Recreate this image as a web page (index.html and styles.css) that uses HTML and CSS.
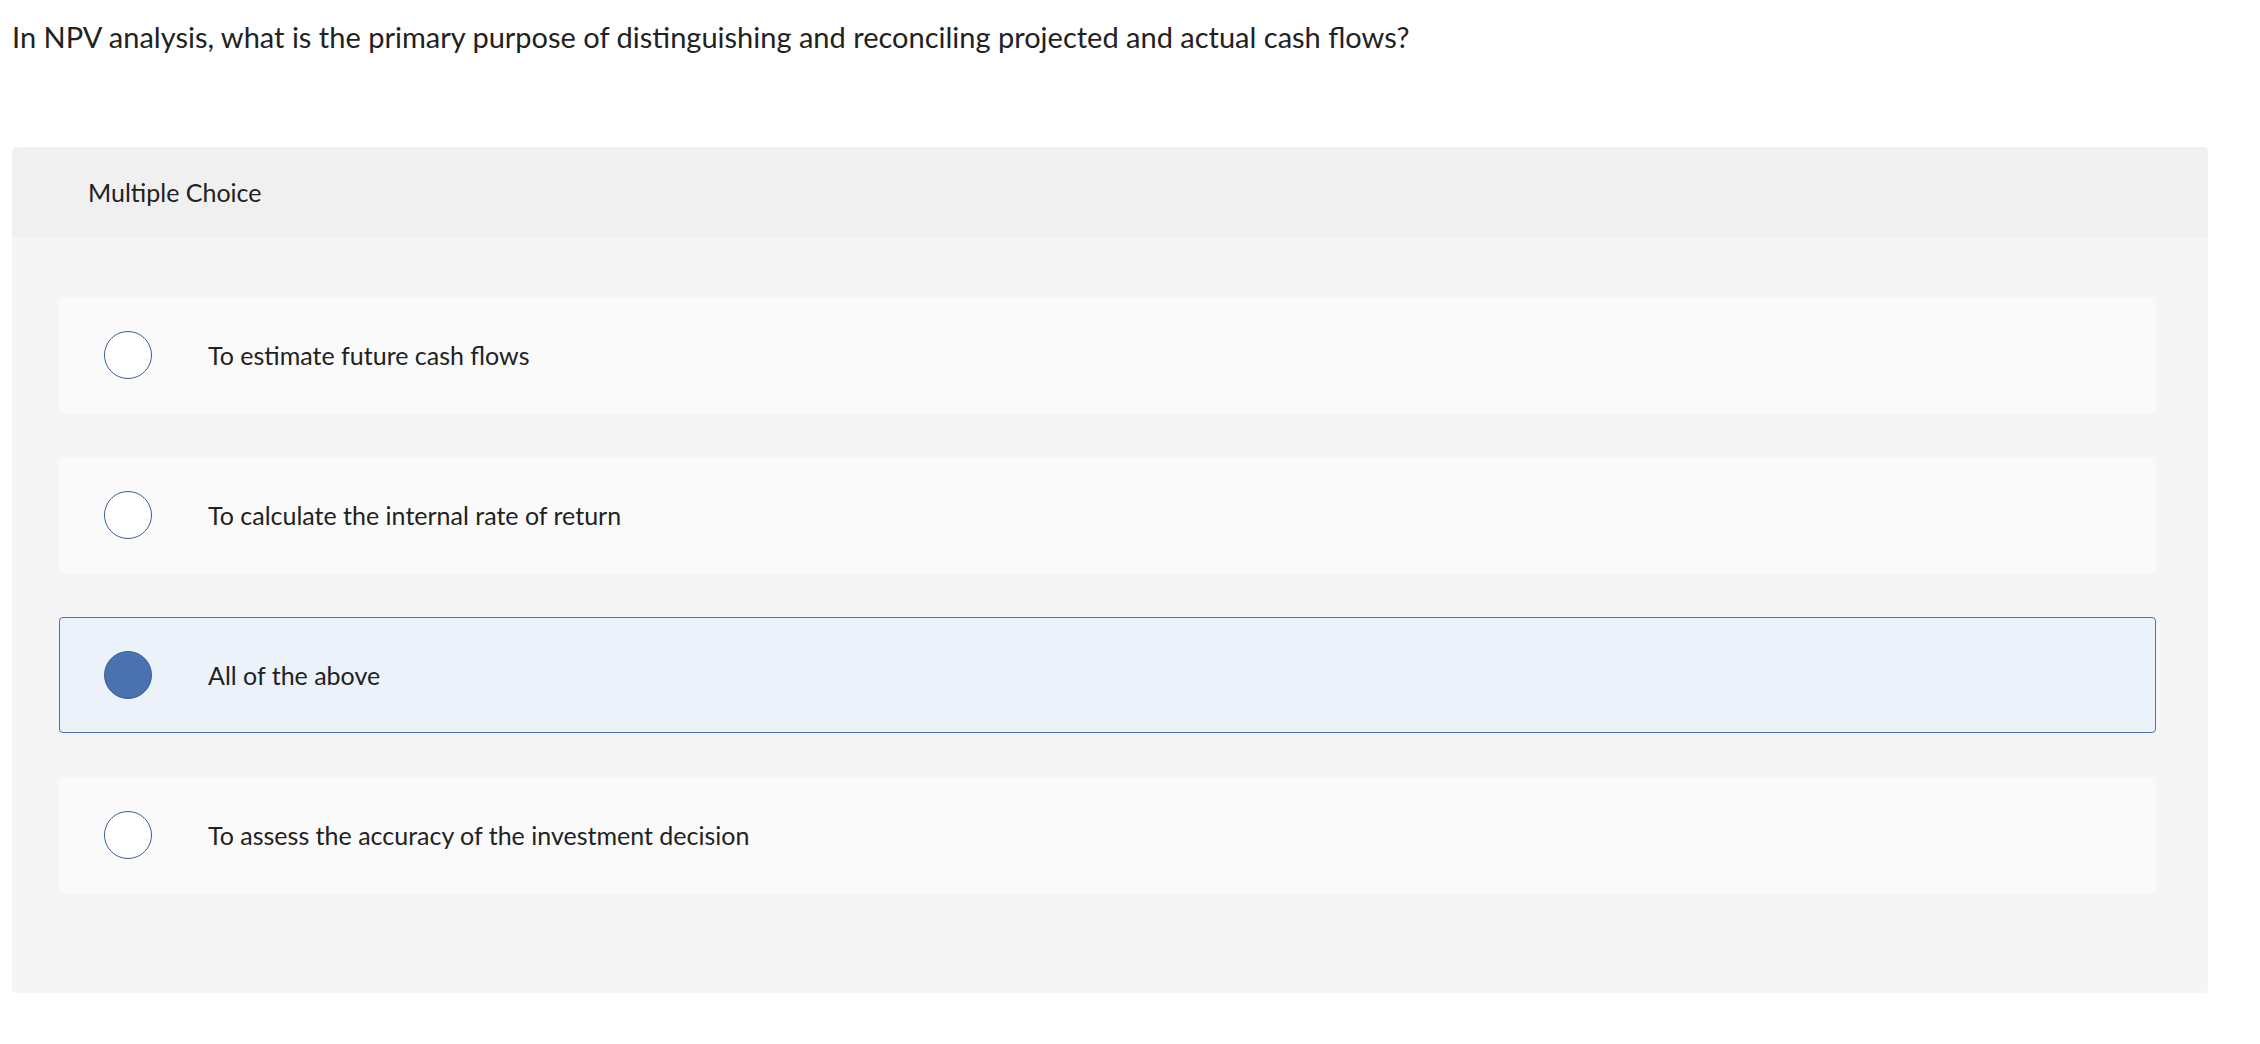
FILE: index.html
```html
<!DOCTYPE html>
<html>
<head>
    <title>Multiple Choice</title>
    <link rel="stylesheet" href="styles.css">
</head>
<body>
    <div class="page">
        <p class="prompt">In NPV analysis, what is the primary purpose of distinguishing and reconciling projected and actual cash flows?</p>

        <div class="question-panel">
            <div class="panel-header">Multiple Choice</div>
            <div class="choices">
                <div class="choice">
                    <span class="radio"></span>
                    <span class="choice-text">To estimate future cash flows</span>
                </div>
                <div class="choice">
                    <span class="radio"></span>
                    <span class="choice-text">To calculate the internal rate of return</span>
                </div>
                <div class="choice selected">
                    <span class="radio"></span>
                    <span class="choice-text">All of the above</span>
                </div>
                <div class="choice">
                    <span class="radio"></span>
                    <span class="choice-text">To assess the accuracy of the investment decision</span>
                </div>
            </div>
        </div>
    </div>
</body>
</html>
```

FILE: styles.css
```css
body {
    margin: 0;
    font-family: Lato, "Open Sans", sans-serif;
    color: #222;
    background: white;
}
.page {
    padding: 0 52px 0 12px;
}
.prompt {
    margin: 0;
    padding-top: 19px;
    font-size: 29px;
    line-height: 36px;
    height: 128px;
}
.question-panel {
    background: #f5f5f5;
    border-radius: 5px;
    overflow: hidden;
}
.panel-header {
    background: #f0f0f0;
    height: 90px;
    line-height: 90px;
    padding-left: 76px;
    font-size: 25px;
}
.choices {
    padding: 60px 52px 56px 47px;
}
.choice {
    display: flex;
    align-items: center;
    height: 116px;
    margin-bottom: 44px;
    background: #fafafa;
    border: 1px solid transparent;
    border-radius: 4px;
    box-sizing: border-box;
    padding-left: 44px;
}
.choice.selected {
    background: #ebf2fa;
    border-color: #4a74b4;
}
.radio {
    width: 48px;
    height: 48px;
    border-radius: 50%;
    border: 1px solid #3d5f94;
    background: white;
    box-sizing: border-box;
    flex-shrink: 0;
}
.choice.selected .radio {
    background: #4a72b0;
}
.choice-text {
    margin-left: 56px;
    font-size: 25px;
}
```
